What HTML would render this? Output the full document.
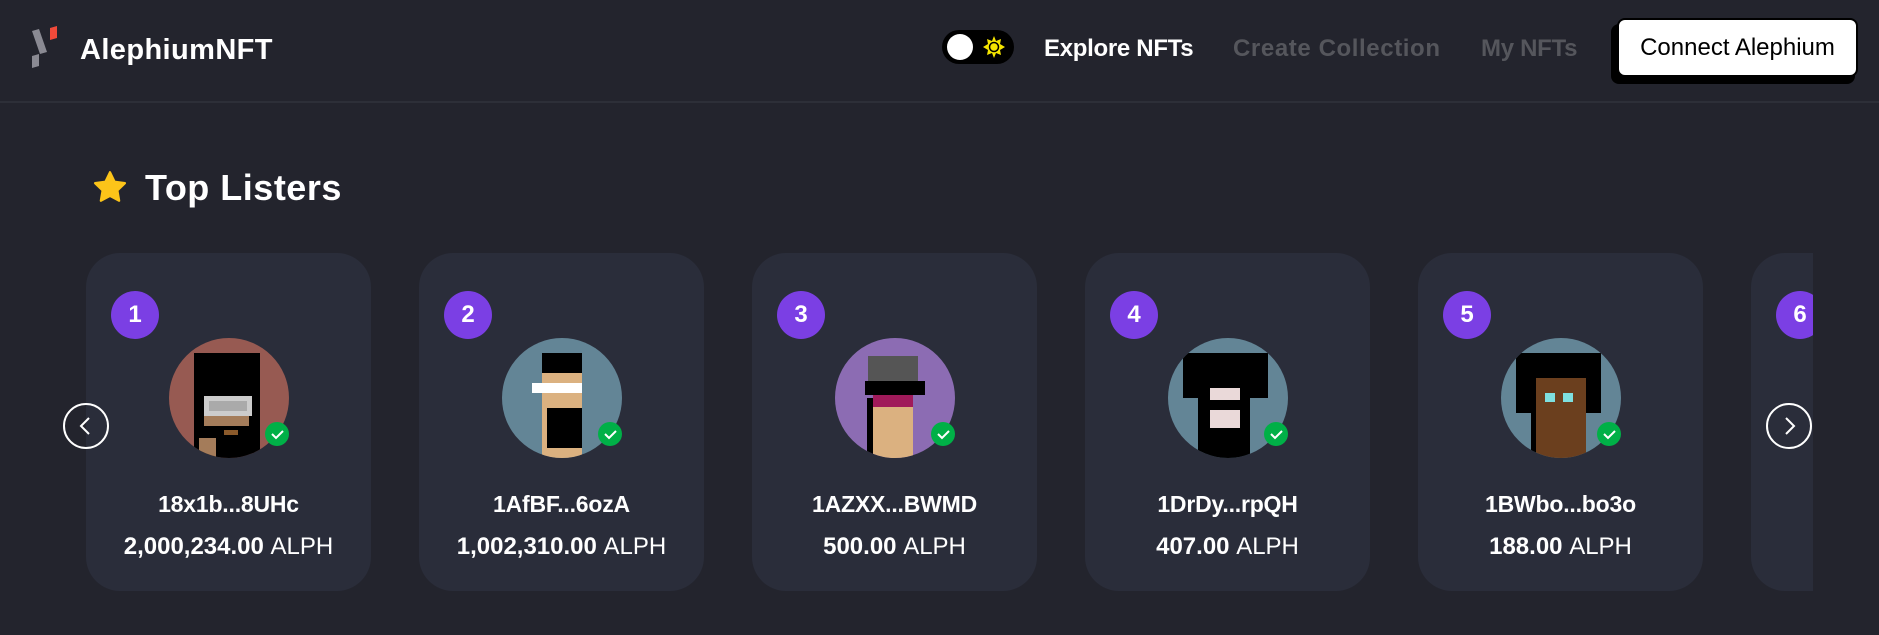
<!DOCTYPE html>
<html><head><meta charset="utf-8"><style>
*{margin:0;padding:0;box-sizing:border-box}
body{width:1879px;height:635px;background:#23242d;font-family:"Liberation Sans",sans-serif;position:relative;overflow:hidden;color:#fff}
.hdr{position:absolute;left:0;top:0;width:1879px;height:103px;border-bottom:2px solid #2d2f38;background:#23242d}
.a{position:absolute}
.nav{font-weight:bold;font-size:24px;letter-spacing:-0.3px;top:35px}
.card{position:absolute;top:253px;width:285px;height:338px;background:#2a2d3a;border-radius:34px}
.badge{position:absolute;left:25px;top:38px;width:48px;height:48px;border-radius:50%;background:#7b3fe4;font-weight:bold;font-size:24px;text-align:center;line-height:48px}
.av{position:absolute;left:83px;top:85px;width:120px;height:120px;border-radius:50%;overflow:hidden}
.chk{position:absolute;left:179px;top:169px;width:24px;height:24px;border-radius:50%;background:#00b047}
.nm{position:absolute;left:0;width:285px;text-align:center;top:238px;font-weight:bold;font-size:23px;letter-spacing:-0.2px}
.pr{position:absolute;left:0;width:285px;text-align:center;top:280px;font-weight:bold;font-size:24px;letter-spacing:0px}
.pr span{font-weight:normal}
.arr{position:absolute;width:46px;height:46px;border:2px solid #fff;border-radius:50%;top:403px}
</style></head><body>
<div class="hdr"></div>
<svg class="a" style="left:30px;top:26px" width="28" height="42" viewBox="0 0 28 42"><polygon points="2,5 9,3 17,26 10,28" fill="#8a8a93"/><polygon points="2,30 9,28 9,40 2,42" fill="#8a8a93"/><polygon points="20,2 27,0 27,12 20,14" fill="#f04a3a"/></svg>
<div class="a" style="left:80px;top:34px;font-weight:bold;font-size:29px;letter-spacing:0.4px">AlephiumNFT</div>
<div class="a" style="left:942px;top:30px;width:72px;height:34px;border-radius:17px;background:#000"></div>
<div class="a" style="left:947px;top:34px;width:26px;height:26px;border-radius:50%;background:#fff"></div>
<svg class="a" style="left:982px;top:35px" width="24" height="24" viewBox="0 0 24 24"><polygon points="12,1 14,6 19,4 18,9 23,12 18,15 19,20 14,18 12,23 10,18 5,20 6,15 1,12 6,9 5,4 10,6" fill="#f5e500"/><circle cx="12" cy="12" r="4.5" fill="none" stroke="#000" stroke-width="1.5"/></svg>
<div class="a nav" style="left:1044px">Explore NFTs</div>
<div class="a nav" style="left:1233px;color:#55565c;letter-spacing:0.6px">Create Collection</div>
<div class="a nav" style="left:1481px;color:#55565c">My NFTs</div>
<div class="a" style="left:1611px;top:24px;width:244px;height:60px;border-radius:8px;background:#000"></div>
<div class="a" style="left:1617px;top:18px;width:241px;height:59px;border-radius:8px;background:#fff;border:2px solid #000;color:#000;font-size:24px;text-align:center;line-height:55px">Connect Alephium</div>
<svg class="a" style="left:92px;top:170px" width="36" height="34" viewBox="0 0 24 23"><path d="M12 1.5l3.1 6.4 7 1-5.1 4.9 1.2 7-6.2-3.3-6.2 3.3 1.2-7L1.9 8.9l7-1z" fill="#fcc419" stroke="#fcc419" stroke-width="1.5" stroke-linejoin="round"/></svg>
<div class="a" style="left:145px;top:167px;font-weight:bold;font-size:36px;letter-spacing:0.5px">Top Listers</div>

<div class="card" style="left:86px"><div class="badge">1</div>
<div class="av" style="background:#975a52"><div class="a" style="left:25px;top:15px;width:66px;height:110px;background:#000"></div><div class="a" style="left:35px;top:58px;width:48px;height:20px;background:#aaa;border:5px solid #ccc"></div><div class="a" style="left:35px;top:78px;width:45px;height:10px;background:#a47c5a"></div><div class="a" style="left:30px;top:100px;width:17px;height:30px;background:#a47c5a"></div><div class="a" style="left:55px;top:92px;width:14px;height:5px;background:#8b5a2b"></div></div>
<div class="chk"><svg width="24" height="24"><path d="M7 12l4 4 7-7" stroke="#fff" stroke-width="2" fill="none"/></svg></div>
<div class="nm">18x1b...8UHc</div><div class="pr">2,000,234.00 <span>ALPH</span></div></div>

<div class="card" style="left:419px"><div class="badge">2</div>
<div class="av" style="background:#638596"><div class="a" style="left:40px;top:15px;width:40px;height:20px;background:#000"></div><div class="a" style="left:40px;top:35px;width:40px;height:85px;background:#dbb180"></div><div class="a" style="left:30px;top:45px;width:50px;height:10px;background:#fff"></div><div class="a" style="left:45px;top:70px;width:35px;height:40px;background:#000"></div></div>
<div class="chk"><svg width="24" height="24"><path d="M7 12l4 4 7-7" stroke="#fff" stroke-width="2" fill="none"/></svg></div>
<div class="nm">1AfBF...6ozA</div><div class="pr">1,002,310.00 <span>ALPH</span></div></div>

<div class="card" style="left:752px"><div class="badge">3</div>
<div class="av" style="background:#8c6cb3"><div class="a" style="left:33px;top:18px;width:50px;height:25px;background:#555"></div><div class="a" style="left:30px;top:43px;width:60px;height:14px;background:#000"></div><div class="a" style="left:38px;top:57px;width:40px;height:70px;background:#dbb180"></div><div class="a" style="left:38px;top:57px;width:40px;height:12px;background:#a01a5a"></div><div class="a" style="left:32px;top:60px;width:6px;height:70px;background:#000"></div></div>
<div class="chk"><svg width="24" height="24"><path d="M7 12l4 4 7-7" stroke="#fff" stroke-width="2" fill="none"/></svg></div>
<div class="nm">1AZXX...BWMD</div><div class="pr">500.00 <span>ALPH</span></div></div>

<div class="card" style="left:1085px"><div class="badge">4</div>
<div class="av" style="background:#638596"><div class="a" style="left:15px;top:15px;width:85px;height:45px;background:#000"></div><div class="a" style="left:30px;top:45px;width:52px;height:80px;background:#000"></div><div class="a" style="left:42px;top:50px;width:30px;height:12px;background:#ead9d9"></div><div class="a" style="left:42px;top:72px;width:30px;height:18px;background:#ead9d9"></div></div>
<div class="chk"><svg width="24" height="24"><path d="M7 12l4 4 7-7" stroke="#fff" stroke-width="2" fill="none"/></svg></div>
<div class="nm">1DrDy...rpQH</div><div class="pr">407.00 <span>ALPH</span></div></div>

<div class="card" style="left:1418px"><div class="badge">5</div>
<div class="av" style="background:#638596"><div class="a" style="left:15px;top:15px;width:85px;height:60px;background:#000"></div><div class="a" style="left:35px;top:40px;width:50px;height:85px;background:#6b3f1e"></div><div class="a" style="left:44px;top:55px;width:10px;height:9px;background:#7ee0e0"></div><div class="a" style="left:62px;top:55px;width:10px;height:9px;background:#7ee0e0"></div><div class="a" style="left:30px;top:60px;width:5px;height:65px;background:#000"></div></div>
<div class="chk"><svg width="24" height="24"><path d="M7 12l4 4 7-7" stroke="#fff" stroke-width="2" fill="none"/></svg></div>
<div class="nm">1BWbo...bo3o</div><div class="pr">188.00 <span>ALPH</span></div></div>

<div class="a" style="left:1751px;top:253px;width:62px;height:338px;overflow:hidden"><div class="card" style="left:0;top:0"><div class="badge">6</div></div></div>

<div class="arr" style="left:63px"><svg width="42" height="42"><path d="M24 13l-8 8 8 8" stroke="#fff" stroke-width="2" fill="none"/></svg></div>
<div class="arr" style="left:1766px"><svg width="42" height="42"><path d="M18 13l8 8-8 8" stroke="#fff" stroke-width="2" fill="none"/></svg></div>
</body></html>
